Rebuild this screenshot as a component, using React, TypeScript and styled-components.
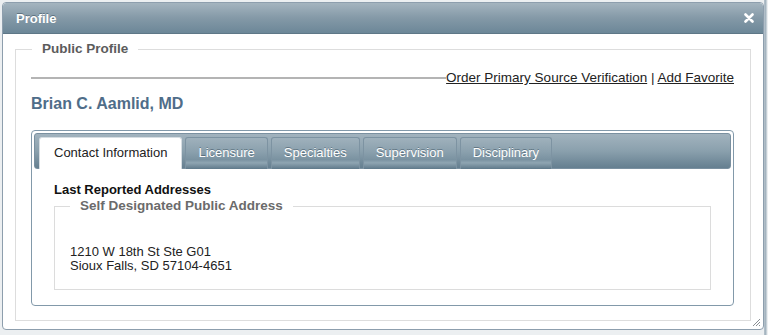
import React from "react";
import styled, { createGlobalStyle } from "styled-components";

const Global = createGlobalStyle`
  html, body { margin: 0; padding: 0; }
  body {
    width: 768px;
    height: 335px;
    overflow: hidden;
    background: #eceff1;
    font-family: "Liberation Sans", Arial, Helvetica, sans-serif;
    color: #222;
  }
`;

const Page = styled.div`
  width: 768px;
  height: 335px;
  padding: 2px 4px 0 2px;
  box-sizing: border-box;
  background: linear-gradient(to right, #eceff1 0, #eceff1 764px, #b7c3cc 764px, #9fb0bc 766px, #eceff1 767px);
`;

const Dialog = styled.div`
  position: relative;
  width: 762px;
  height: 328px;
  box-sizing: border-box;
  border: 1px solid #8d9ead;
  border-radius: 4px;
  background: #fff;
  display: flex;
  flex-direction: column;
  overflow: hidden;
`;

const TitleBar = styled.div`
  height: 30px;
  flex: none;
  display: flex;
  align-items: center;
  justify-content: space-between;
  padding: 0 9px 0 13px;
  border-radius: 3px 3px 0 0;
  background: linear-gradient(#a4b4bf 0%, #8499a7 50%, #6c8798 100%);
  border-bottom: 1px solid #5e7787;
`;

const Title = styled.span`
  color: #fff;
  font-weight: bold;
  font-size: 13px;
  text-shadow: 0 -1px 0 rgba(40, 60, 75, 0.45);
`;

const CloseButton = styled.span`
  display: flex;
  width: 10px;
  height: 10px;
`;

const Body = styled.div`
  flex: 1;
  padding: 7px 12px 8px 12px;
  display: flex;
  flex-direction: column;
`;

const FieldSet = styled.fieldset<{ $inner?: boolean }>`
  margin: 0;
  min-width: 0;
  border: 1px solid ${(p) => (p.$inner ? "#dcdcdc" : "#dddddd")};
  padding: ${(p) => (p.$inner ? "31px 15px 16px 15px" : "13px 16px 14px 15px")};
  flex: ${(p) => (p.$inner ? "none" : "1")};
`;

const Legend = styled.legend<{ $inner?: boolean }>`
  padding: 0 10px;
  margin-left: ${(p) => (p.$inner ? "0" : "1px")};
  font-weight: bold;
  font-size: 13.5px;
  line-height: 16px;
  color: ${(p) => (p.$inner ? "#6b6b6b" : "#5c5c5c")};
`;

const ActionRow = styled.div`
  display: flex;
  align-items: center;
  height: 16px;
`;

const Rule = styled.div`
  flex: 1;
  height: 2px;
  background: #b4b4b4;
`;

const Links = styled.div`
  font-size: 13.5px;
  line-height: 16px;
  color: #222;
  white-space: nowrap;
`;

const LinkA = styled.a`
  color: #222;
  text-decoration: underline;
  cursor: pointer;
`;

const Name = styled.h2`
  margin: 8px 0 0 0;
  font-size: 16px;
  line-height: 20px;
  font-weight: bold;
  color: #4f6d89;
`;

const TabWidget = styled.div`
  margin-top: 16px;
  border: 1px solid #8299aa;
  border-radius: 4px;
  padding: 2px;
`;

const TabHeader = styled.div`
  display: flex;
  align-items: flex-end;
  gap: 3px;
  height: 36px;
  box-sizing: border-box;
  padding: 0 4px 0 4px;
  border-radius: 3px;
  border: 1px solid #7a90a0;
  background: linear-gradient(#a2b3be 0%, #8aa0ad 50%, #657f90 100%);
`;

const Tab = styled.div<{ $active?: boolean }>`
  height: 32px;
  box-sizing: border-box;
  margin-bottom: -1px;
  padding: ${(p) => (p.$active ? "0 14px 3px" : "0 12px 3px")};
  display: flex;
  align-items: center;
  font-size: 13px;
  border-radius: 3px 3px 0 0;
  border: 1px solid ${(p) => (p.$active ? "#d6dde2" : "#7d93a2")};
  border-bottom: none;
  color: ${(p) => (p.$active ? "#222" : "#fff")};
  text-shadow: ${(p) => (p.$active ? "none" : "0 -1px 0 rgba(40,60,75,0.45)")};
  background: ${(p) =>
    p.$active
      ? "#fff"
      : "linear-gradient(#9fb1bc 0%, #8aa0ad 45%, #7a92a1 70%, #8fa5b2 80%, #5f798a 100%)"};
`;

const TabPanel = styled.div`
  padding: 13px 20px 13px 20px;
`;

const SectionTitle = styled.div`
  font-weight: bold;
  font-size: 13px;
  line-height: 16px;
  color: #111;
`;

const AddressLine = styled.div`
  font-size: 13px;
  line-height: 14px;
  color: #222;
`;

const ResizeHandle = styled.svg`
  position: absolute;
  right: 2px;
  bottom: 2px;
`;

const tabs = ["Contact Information", "Licensure", "Specialties", "Supervision", "Disciplinary"];

export default function App() {
  return (
    <Page>
      <Global />
      <Dialog>
        <TitleBar>
          <Title>Profile</Title>
          <CloseButton>
            <svg width="10" height="10" viewBox="0 0 10 10">
              <path d="M1.5 1.5 L8.5 8.5 M8.5 1.5 L1.5 8.5" stroke="#fff" strokeWidth="2.6" strokeLinecap="round" />
            </svg>
          </CloseButton>
        </TitleBar>
        <Body>
          <FieldSet>
            <Legend>Public Profile</Legend>
            <ActionRow>
              <Rule />
              <Links>
                <LinkA>Order Primary Source Verification</LinkA> | <LinkA>Add Favorite</LinkA>
              </Links>
            </ActionRow>
            <Name>Brian C. Aamlid, MD</Name>
            <TabWidget>
              <TabHeader>
                {tabs.map((t, i) => (
                  <Tab key={t} $active={i === 0}>
                    {t}
                  </Tab>
                ))}
              </TabHeader>
              <TabPanel>
                <SectionTitle>Last Reported Addresses</SectionTitle>
                <FieldSet $inner>
                  <Legend $inner>Self Designated Public Address</Legend>
                  <AddressLine>1210 W 18th St Ste G01</AddressLine>
                  <AddressLine>Sioux Falls, SD 57104-4651</AddressLine>
                </FieldSet>
              </TabPanel>
            </TabWidget>
          </FieldSet>
        </Body>
        <ResizeHandle width="9" height="9" viewBox="0 0 9 9">
          <path d="M8 1 L1 8 M8 4 L4 8 M8 7 L7 8" stroke="#8a8f94" strokeWidth="1" />
        </ResizeHandle>
      </Dialog>
    </Page>
  );
}
